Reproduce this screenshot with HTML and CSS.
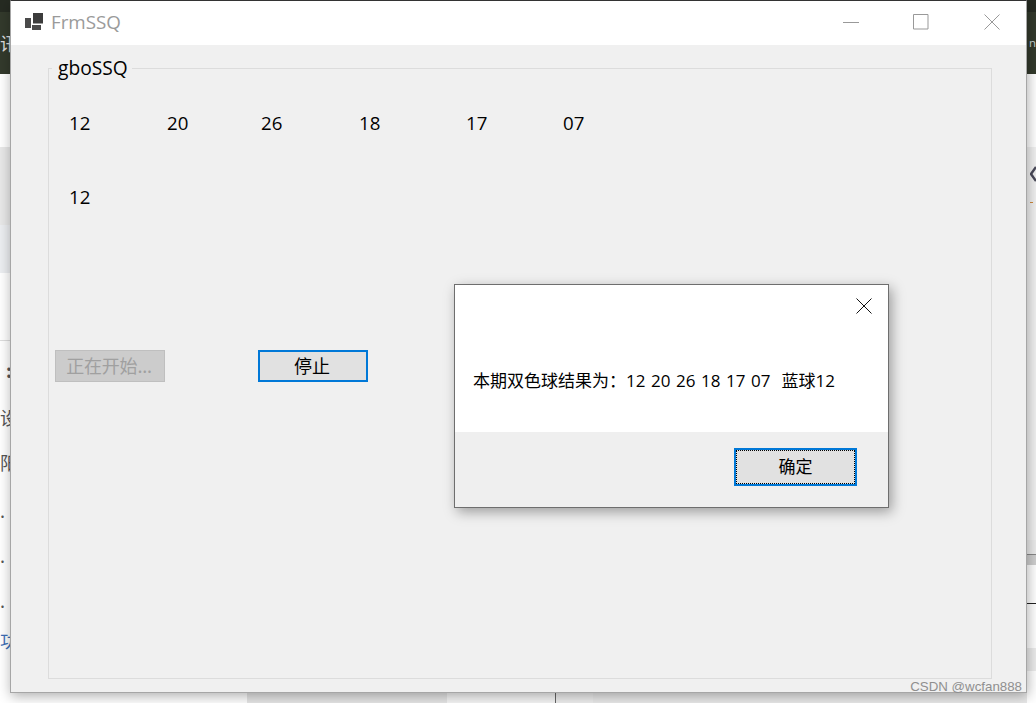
FILE: index.html
```html
<!DOCTYPE html>
<html lang="zh">
<head>
<meta charset="utf-8">
<title>FrmSSQ</title>
<link rel="stylesheet" href="styles.css">
</head>
<body>
<div class="backdrop">
  <div class="side side-left">
    <div class="bar-dark"></div>
    <div class="bar-olive">讯</div>
    <div class="band b-white-73"></div>
    <div class="band b-gray-78"></div>
    <div class="band b-blue-48"></div>
    <div class="band b-white-67"></div>
    <div class="band b-line"></div>
    <div class="lines">
      <div class="ln colon">:</div>
      <div class="ln">设</div>
      <div class="ln">阳</div>
      <div class="ln first-dot">.</div>
      <div class="ln">.</div>
      <div class="ln">.</div>
      <div class="ln link">功</div>
    </div>
  </div>
  <div class="center">
    <div class="center-fill"></div>
    <div class="bottom-strip">
      <div class="seg s200"></div>
      <div class="seg s247"></div>
      <div class="seg s447"></div>
      <div class="seg s555"></div>
      <div class="seg s593"></div>
    </div>
  </div>
  <div class="side side-right">
    <div class="bar-dark"></div>
    <div class="bar-olive right-n">n</div>
    <div class="band b-white-73"></div>
    <div class="band r-gray">
      <svg class="chev" width="6" height="18" viewBox="0 0 6 18"><path d="M6 2L1 9l5 7" stroke="#4a4a5a" stroke-width="2.4" fill="none"/></svg>
      <span class="tick"></span>
    </div>
    <div class="band r-l1"></div>
    <div class="band r-l2"></div>
    <div class="band r-l3"></div>
    <div class="band r-l4"></div>
    <div class="band r-l5"></div>
    <div class="band r-l6"></div>
    <div class="band r-l7"></div>
  </div>
</div>
<main class="window">
  <header class="titlebar">
    <svg class="appicon" width="20" height="18" viewBox="0 0 20 18"><path fill="#3c3c3c" d="M9 0h10v10.500H9z"/><path fill="#4a4a4a" d="M1 5h6v10H1z"/><path fill="#4a4a4a" d="M8 12h9v5H8z"/></svg>
    <span class="title">FrmSSQ</span>
    <div class="controls">
      <svg class="c-min" width="16" height="16" viewBox="0 0 16 16"><path d="M0 8.500h16" stroke="#999" fill="none"/></svg>
      <svg class="c-max" width="16" height="16" viewBox="0 0 16 16"><path d="M.5.500h14.500v14.500H.5z" stroke="#999" fill="none"/></svg>
      <svg class="c-close" width="16" height="16" viewBox="0 0 16 16"><path d="M.5.500l15 15M15.500.500l-15 15" stroke="#999" fill="none"/></svg>
    </div>
  </header>
  <section class="client">
    <fieldset class="group">
      <legend class="legend">gboSSQ</legend>
      <div class="row"><span>12</span><span>20</span><span>26</span><span>18</span><span>17</span><span>07</span></div>
      <div class="row second"><span>12</span></div>
      <div class="actions">
        <button class="btn disabled" type="button">正在开始...</button>
        <button class="btn focus" type="button">停止</button>
      </div>
    </fieldset>
  </section>
  <span class="mark">CSDN @wcfan888</span>
</main>
<aside class="dialog">
  <div class="dlg-top">
    <svg class="dlg-x" width="16" height="16" viewBox="0 0 16 16"><path d="M.5.500l15 15M15.500.500l-15 15" stroke="#111" fill="none"/></svg>
    <p class="dlg-msg">本期双色球结果为：12 20 26 18 17 07&nbsp;&nbsp;蓝球12</p>
  </div>
  <div class="dlg-bottom"><button class="ok" type="button">确定</button></div>
</aside>
</body>
</html>
```
FILE: styles.css
```css
* { box-sizing: border-box; }
html, body { margin: 0; padding: 0; }
body {
  width: 1036px; height: 703px; overflow: hidden; position: relative;
  background: #fff;
  font-family: "Open Sans", "Noto Sans CJK SC", sans-serif;
}
.backdrop { position: absolute; inset: 0; display: flex; }
.side { flex: none; display: flex; flex-direction: column; font-family: "Noto Sans CJK SC", sans-serif; white-space: nowrap; }
.side-left { width: 10px; }
.side-right { width: 9px; }
.center { flex: 1; display: flex; flex-direction: column; }
.center-fill { flex: 1; }
.bottom-strip { height: 10px; display: flex; }
.seg { height: 100%; }
.s200 { width: 237px; background: #fff; }
.s247 { width: 200px; background: #e6e6e6; }
.s447 { width: 108px; background: #f6f6f6; }
.s555 { width: 38px; background: #eee; border-left: 1px solid #666; }
.s593 { flex: 1; background: #e9e9e9; }
.bar-dark { height: 12px; background: #262b22; }
.bar-olive { height: 62px; background: #333a2c; color: #dcdcdc; font-size: 18px; line-height: 62px; }
.right-n { font-family: "Open Sans", sans-serif; font-size: 11.5px; padding-left: 2px; color: #c9d6d8; }
.band { flex: none; }
.b-white-73 { height: 73px; background: #fff; }
.b-gray-78 { height: 78px; background: #e8e8e8; }
.b-blue-48 { height: 48px; background: #eceef1; }
.b-white-67 { height: 67px; background: #fff; }
.b-line { height: 1px; background: #ddd; }
.lines { padding-top: 7px; }
.ln { height: 45px; line-height: 45px; font-size: 18px; color: #555; }
.colon { padding-left: 6px; font-weight: 700; margin-bottom: 2px; }
.first-dot { margin-top: 3px; }
.link { color: #3d6fb5; margin-top: -5px; }
.r-gray { height: 393px; background: #f1f1f1; padding-top: 18px; display: flex; flex-direction: column; align-items: flex-end; }
.chev { flex: none; }
.tick { width: 3px; height: 1px; background: #d08a3c; margin: 19px 0 0; align-self: flex-start; margin-left: 3px; }
.r-l1 { height: 14px; background: #ececec; }
.r-l2 { height: 1px; background: #888; }
.r-l3 { height: 10px; background: #cfcfcf; }
.r-l4 { height: 38px; background: #fff; }
.r-l5 { height: 1px; background: #222; }
.r-l6 { height: 44px; background: #fff; }
.r-l7 { height: 23px; background: #ececec; }
.window {
  position: absolute; left: 10px; top: 0; width: 1017px; height: 693px;
  border: 1px solid #a6a6a6; border-top-color: #333;
  background: #f0f0f0; display: flex; flex-direction: column;
  box-shadow: 1px 3px 12px rgba(0,0,0,.32);
}
.titlebar { height: 44px; background: #fff; display: flex; align-items: center; padding: 0 0 2px 13px; flex: none; }
.appicon { flex: none; }
.title { margin-left: 7px; font-size: 18.8px; color: #9a9a9a; }
.controls { margin-left: auto; display: flex; margin-right: 26px; }
.c-max { margin-left: 54px; }
.c-close { margin-left: 55px; }
.client { flex: 1; padding: 13px 34px 13px 37px; }
.group { height: 100%; margin: 0; padding: 0 0 0 20px; border: 1px solid #dcdcdc; min-width: 0; }
.legend { padding: 0 4px 0 6px; margin-left: -17px; font-size: 19.2px; line-height: 20px; color: #000; height: 20px; }
.row { display: grid; grid-template-columns: 98px 94px 98px 107px 97px auto; font-size: 18.7px; line-height: 24px; color: #000; margin-top: 33px; }
.row.second { margin-top: 50px; }
.actions { display: flex; gap: 93px; margin: 141px 0 0 -14px; }
.btn { width: 110px; height: 32px; font: 18px "Noto Sans CJK SC", sans-serif; padding: 0 2px 2px 0; }
.btn.disabled { background: #cccccc; border: 1px solid #bfbfbf; color: #a0a0a0; letter-spacing: -.2px; }
.btn.focus { background: #e1e1e1; border: 2px solid #0078d7; color: #000; }
.mark { position: absolute; right: 4px; bottom: -2px; font: 13.3px "Liberation Sans", sans-serif; color: #8f8f8f; }
.dialog {
  position: absolute; left: 454px; top: 284px; width: 435px; height: 224px;
  border: 1px solid #6e6e6e; background: #fff;
  display: flex; flex-direction: column;
  box-shadow: 3px 4px 12px rgba(0,0,0,.35);
}
.dlg-top { position: relative; height: 147px; background: #fff; flex: none; }
.dlg-x { position: absolute; left: 401px; top: 13px; }
.dlg-msg { margin: 0; padding: 84px 0 0 18px; font-size: 17px; line-height: 24px; color: #000; white-space: nowrap; word-spacing: 1.15px; }
.dlg-bottom { flex: 1; background: #efefef; display: flex; align-items: flex-start; justify-content: flex-end; padding: 16px 31px 0 0; }
.ok { width: 123px; height: 38px; background: #e1e1e1; border: 2px solid #0078d7; outline: 1px dotted #000; outline-offset: -3px; font: 17px "Noto Sans CJK SC", sans-serif; color: #000; padding: 0 0 3px; }
```
